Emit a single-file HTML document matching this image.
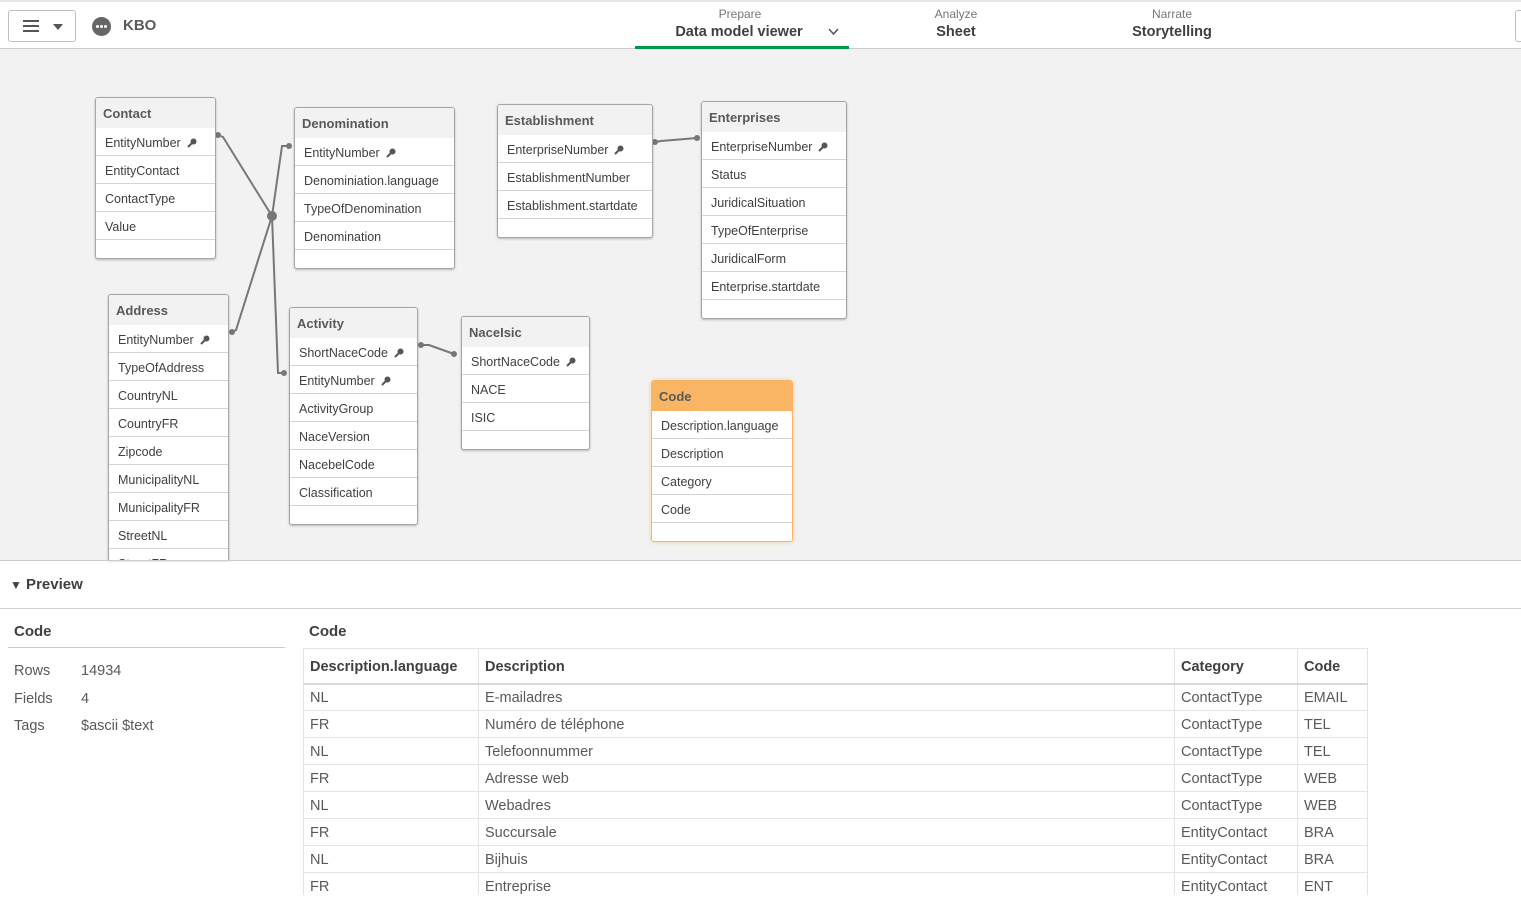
<!DOCTYPE html>
<html><head><meta charset="utf-8"><style>
*{box-sizing:border-box;margin:0;padding:0}
body{width:1521px;height:904px;overflow:hidden;background:#fff;font-family:"Liberation Sans",sans-serif;color:#404040;position:relative}
.top{position:absolute;left:0;top:0;width:1521px;height:49px;background:#fff;border-top:2px solid #e6e6e6;border-bottom:1px solid #ccc}
.canvas{position:absolute;left:0;top:49px;width:1521px;height:511px;background:#f2f2f2;overflow:hidden}
.box{position:absolute;background:#fff;border:1px solid #a6a6a6;border-radius:3px;box-shadow:0 1px 2px rgba(0,0,0,.25);overflow:hidden}
.box .h{height:30px;background:#f2f2f2;font-size:13px;font-weight:bold;color:#595959;padding:8px 0 0 7px}
.box .r{height:28px;border-bottom:1px solid #d5d5d5;font-size:12.5px;padding:8px 0 0 9px;white-space:nowrap;color:#404040}
.box .e{height:18px}
.k{display:inline-block;margin-left:6px;vertical-align:-1px}
.nav{position:absolute;text-align:center}
.nav .s{font-size:12px;color:#777}
.nav .b{font-size:14.5px;font-weight:bold;color:#404040;margin-top:3px}
table{border-collapse:collapse;position:absolute;left:303px;top:648px}
td,th{border:1px solid #e3e3e3;font-size:14.5px;text-align:left;padding:2px 6px 0;height:27px;white-space:nowrap;color:#595959;font-weight:normal}
th{height:35px;font-weight:bold;color:#404040;border-bottom:2px solid #d9d9d9}
</style></head><body>
<div class="top">
  <div style="position:absolute;left:8px;top:8px;width:68px;height:32px;border:1px solid #bfbfbf;border-radius:3px">
    <div style="position:absolute;left:14px;top:9px;width:16px;height:2px;background:#555;box-shadow:0 5px 0 #555,0 10px 0 #555"></div>
    <div style="position:absolute;left:44px;top:13px;width:0;height:0;border-left:5px solid transparent;border-right:5px solid transparent;border-top:6px solid #555"></div>
  </div>
  <div style="position:absolute;left:92px;top:15px;width:19px;height:19px;border-radius:50%;background:#666"><span style="position:absolute;left:4px;top:8px;width:3px;height:3px;background:#fff;border-radius:50%;box-shadow:4px 0 0 #fff,8px 0 0 #fff"></span></div>
  <div style="position:absolute;left:123px;top:15px;font-size:15px;font-weight:bold;color:#595959">KBO</div>
  <div class="nav" style="left:640px;top:5px;width:200px"><div class="s">Prepare</div><div class="b" style="margin-left:-2px">Data model viewer</div></div>
  <svg style="position:absolute;left:828px;top:26px" width="11" height="8"><path d="M1 1 L5.5 6 L10 1" stroke="#555" stroke-width="1.5" fill="none"/></svg>
  <div style="position:absolute;left:635px;top:44px;width:214px;height:3px;background:#009845"></div>
  <div class="nav" style="left:906px;top:5px;width:100px"><div class="s">Analyze</div><div class="b">Sheet</div></div>
  <div class="nav" style="left:1112px;top:5px;width:120px"><div class="s">Narrate</div><div class="b">Storytelling</div></div>
  <div style="position:absolute;left:1515px;top:8px;width:20px;height:32px;border:1px solid #bfbfbf;border-radius:3px"></div>
</div>
<div class="canvas">
<svg style="position:absolute;left:0;top:-49px" width="1521" height="560">
<g stroke="#777" stroke-width="2" fill="none">
<path d="M218 135 L223 137 L272 216"/>
<path d="M289 146 L282 146 L272 216"/>
<path d="M232 332 L236 330 L272 216"/>
<path d="M272 216 L278 373 L285 373"/>
<path d="M421 345 L429 345 L454 354"/>
<path d="M655 142 L661 141 L697 138"/>
</g>
<g fill="#777"><circle cx="272" cy="216" r="5"/><circle cx="218" cy="135" r="3"/><circle cx="289" cy="146" r="3"/><circle cx="232" cy="332" r="3"/><circle cx="284" cy="373" r="3"/><circle cx="421" cy="345" r="3"/><circle cx="454" cy="354" r="3"/><circle cx="655" cy="142" r="3"/><circle cx="697" cy="138" r="3"/></g>
</svg>
</div>
<svg width="0" height="0" style="position:absolute"><defs><symbol id="key" viewBox="0 0 10 10"><circle cx="6.5" cy="3.5" r="3" fill="#555"/><path d="M5 5 L1 9" stroke="#555" stroke-width="2"/></symbol></defs></svg>

<div class="box" style="left:95px;top:97px;width:121px"><div class="h">Contact</div><div class="r">EntityNumber<svg class="k" width="10" height="10"><use href="#key"/></svg></div><div class="r">EntityContact</div><div class="r">ContactType</div><div class="r">Value</div><div class="e"></div></div>
<div class="box" style="left:294px;top:107px;width:161px"><div class="h">Denomination</div><div class="r">EntityNumber<svg class="k" width="10" height="10"><use href="#key"/></svg></div><div class="r">Denominiation.language</div><div class="r">TypeOfDenomination</div><div class="r">Denomination</div><div class="e"></div></div>
<div class="box" style="left:497px;top:104px;width:156px"><div class="h">Establishment</div><div class="r">EnterpriseNumber<svg class="k" width="10" height="10"><use href="#key"/></svg></div><div class="r">EstablishmentNumber</div><div class="r">Establishment.startdate</div><div class="e"></div></div>
<div class="box" style="left:701px;top:101px;width:146px"><div class="h">Enterprises</div><div class="r">EnterpriseNumber<svg class="k" width="10" height="10"><use href="#key"/></svg></div><div class="r">Status</div><div class="r">JuridicalSituation</div><div class="r">TypeOfEnterprise</div><div class="r">JuridicalForm</div><div class="r">Enterprise.startdate</div><div class="e"></div></div>
<div class="box" style="left:108px;top:294px;width:121px;height:266px;border-bottom:none;border-radius:3px 3px 0 0"><div class="h">Address</div><div class="r">EntityNumber<svg class="k" width="10" height="10"><use href="#key"/></svg></div><div class="r">TypeOfAddress</div><div class="r">CountryNL</div><div class="r">CountryFR</div><div class="r">Zipcode</div><div class="r">MunicipalityNL</div><div class="r">MunicipalityFR</div><div class="r">StreetNL</div><div class="r">StreetFR</div></div>
<div class="box" style="left:289px;top:307px;width:129px"><div class="h">Activity</div><div class="r">ShortNaceCode<svg class="k" width="10" height="10"><use href="#key"/></svg></div><div class="r">EntityNumber<svg class="k" width="10" height="10"><use href="#key"/></svg></div><div class="r">ActivityGroup</div><div class="r">NaceVersion</div><div class="r">NacebelCode</div><div class="r">Classification</div><div class="e"></div></div>
<div class="box" style="left:461px;top:316px;width:129px"><div class="h">NaceIsic</div><div class="r">ShortNaceCode<svg class="k" width="10" height="10"><use href="#key"/></svg></div><div class="r">NACE</div><div class="r">ISIC</div><div class="e"></div></div>
<div class="box" style="left:651px;top:380px;width:142px;border-color:#f9b563;box-shadow:0 0 4px rgba(249,181,99,.6)"><div class="h" style="background:#f9b563">Code</div><div class="r">Description.language</div><div class="r">Description</div><div class="r">Category</div><div class="r">Code</div><div class="e"></div></div>

<div style="position:absolute;left:0;top:560px;width:1521px;height:1px;background:#ccc"></div>
<div style="position:absolute;left:10px;top:576px;font-size:15px;font-weight:bold;color:#404040"><span style="font-size:12px">▼</span> Preview</div>
<div style="position:absolute;left:0;top:608px;width:1521px;height:1px;background:#d0d0d0"></div>
<div style="position:absolute;left:14px;top:623px;font-size:15px;font-weight:bold">Code</div>
<div style="position:absolute;left:8px;top:647px;width:277px;height:1px;background:#ccc"></div>
<div style="position:absolute;left:14px;top:658px;font-size:14.5px;line-height:27.5px;color:#595959">Rows<br>Fields<br>Tags</div>
<div style="position:absolute;left:81px;top:658px;font-size:14.5px;line-height:27.5px;color:#595959">14934<br>4<br>$ascii $text</div>
<div style="position:absolute;left:309px;top:623px;font-size:15px;font-weight:bold">Code</div>
<table>
<tr><th style="width:175px">Description.language</th><th style="width:696px">Description</th><th style="width:123px">Category</th><th style="width:70px">Code</th></tr>
<tr><td>NL</td><td>E-mailadres</td><td>ContactType</td><td>EMAIL</td></tr>
<tr><td>FR</td><td>Numéro de téléphone</td><td>ContactType</td><td>TEL</td></tr>
<tr><td>NL</td><td>Telefoonnummer</td><td>ContactType</td><td>TEL</td></tr>
<tr><td>FR</td><td>Adresse web</td><td>ContactType</td><td>WEB</td></tr>
<tr><td>NL</td><td>Webadres</td><td>ContactType</td><td>WEB</td></tr>
<tr><td>FR</td><td>Succursale</td><td>EntityContact</td><td>BRA</td></tr>
<tr><td>NL</td><td>Bijhuis</td><td>EntityContact</td><td>BRA</td></tr>
<tr><td>FR</td><td>Entreprise</td><td>EntityContact</td><td>ENT</td></tr>
</table>
<div style="position:absolute;left:0;top:895px;width:1521px;height:9px;background:#fff"></div>
</body></html>
